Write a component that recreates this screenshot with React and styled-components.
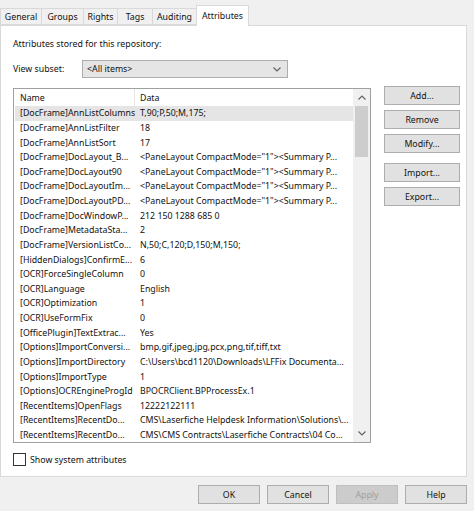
import React from "react";
import styled, { createGlobalStyle } from "styled-components";

const GlobalStyle = createGlobalStyle`
  html, body { margin: 0; padding: 0; background: #f0f0f0; }
  body {
    font-family: "Noto Sans", "Liberation Sans", sans-serif;
    font-size: 8.8px;
    color: #111;
  }
  * { box-sizing: border-box; }
`;

const TABS = ["General", "Groups", "Rights", "Tags", "Auditing", "Attributes"];
const TAB_WIDTHS = [42, 42, 34, 35, 44, 53];

const ROWS = [
  ["[DocFrame]AnnListColumns", "T,90;P,50;M,175;"],
  ["[DocFrame]AnnListFilter", "18"],
  ["[DocFrame]AnnListSort", "17"],
  ["[DocFrame]DocLayout_B...", '<PaneLayout CompactMode="1"><Summary P...'],
  ["[DocFrame]DocLayout90", '<PaneLayout CompactMode="1"><Summary P...'],
  ["[DocFrame]DocLayoutIm...", '<PaneLayout CompactMode="1"><Summary P...'],
  ["[DocFrame]DocLayoutPD...", '<PaneLayout CompactMode="1"><Summary P...'],
  ["[DocFrame]DocWindowP...", "212 150 1288 685 0"],
  ["[DocFrame]MetadataSta...", "2"],
  ["[DocFrame]VersionListCo...", "N,50;C,120;D,150;M,150;"],
  ["[HiddenDialogs]ConfirmE...", "6"],
  ["[OCR]ForceSingleColumn", "0"],
  ["[OCR]Language", "English"],
  ["[OCR]Optimization", "1"],
  ["[OCR]UseFormFix", "0"],
  ["[OfficePlugin]TextExtrac...", "Yes"],
  ["[Options]ImportConversi...", "bmp,gif,jpeg,jpg,pcx,png,tif,tiff,txt"],
  ["[Options]ImportDirectory", "C:\\Users\\bcd1120\\Downloads\\LFFix Documenta..."],
  ["[Options]ImportType", "1"],
  ["[Options]OCREngineProgId", "BPOCRClient.BPProcessEx.1"],
  ["[RecentItems]OpenFlags", "12222122111"],
  ["[RecentItems]RecentDo...", "CMS\\Laserfiche Helpdesk Information\\Solutions\\..."],
  ["[RecentItems]RecentDo...", "CMS\\CMS Contracts\\Laserfiche Contracts\\04 Co..."],
];

const SIDE_BUTTONS = [
  ["Add...", 0],
  ["Remove", 0],
  ["Modify...", 0],
  ["Import...", 5],
  ["Export...", 0],
];

const Chevron = ({ up }) => (
  <svg width="8" height="5" viewBox="0 0 8 5">
    <path
      d={up ? "M0.5 4.5 L4 1 L7.5 4.5" : "M0.5 0.5 L4 4 L7.5 0.5"}
      fill="none"
      stroke="#606060"
      strokeWidth="1.1"
    />
  </svg>
);

export default function App() {
  return (
    <Window>
      <GlobalStyle />
      <TabStrip>
        {TABS.map((t, i) => (
          <Tab key={t} $active={t === "Attributes"} style={{ width: TAB_WIDTHS[i] }}>
            {t}
          </Tab>
        ))}
      </TabStrip>
      <Panel>
        <Caption>Attributes stored for this repository:</Caption>
        <SubsetRow>
          <span>View subset:</span>
          <Combo>
            <span>&lt;All items&gt;</span>
            <Chevron />
          </Combo>
        </SubsetRow>
        <Body>
          <ListBox>
            <ListMain>
              <HeaderRow>
                <HeadCell $w={120}>Name</HeadCell>
                <HeadCell>Data</HeadCell>
              </HeaderRow>
              {ROWS.map(([name, data], i) => (
                <Row key={i} $selected={i === 0}>
                  <Cell $w={120}>{name}</Cell>
                  <Cell>{data}</Cell>
                </Row>
              ))}
            </ListMain>
            <ScrollBar>
              <ScrollArrow>
                <Chevron up />
              </ScrollArrow>
              <Track>
                <Thumb />
              </Track>
              <ScrollArrow>
                <Chevron />
              </ScrollArrow>
            </ScrollBar>
          </ListBox>
          <SideButtons>
            {SIDE_BUTTONS.map(([label, extra]) => (
              <SideButton key={label} $extra={extra}>
                {label}
              </SideButton>
            ))}
          </SideButtons>
        </Body>
        <CheckRow>
          <CheckBox />
          <span>Show system attributes</span>
        </CheckRow>
      </Panel>
      <Footer>
        <DialogButton>OK</DialogButton>
        <DialogButton>Cancel</DialogButton>
        <DialogButton disabled>Apply</DialogButton>
        <DialogButton>Help</DialogButton>
      </Footer>
    </Window>
  );
}

const Window = styled.div`
  width: 474px;
  height: 511px;
  background: #f0f0f0;
  overflow: hidden;
`;

const TabStrip = styled.div`
  display: flex;
  align-items: flex-end;
  height: 26px;
  padding-top: 5px;
  position: relative;
  z-index: 1;
  margin-bottom: -1px;
`;

const Tab = styled.div`
  height: ${(p) => (p.$active ? "21px" : "17px")};
  margin-bottom: ${(p) => (p.$active ? "0" : "1px")};
  margin-left: ${(p) => (p.$active ? "-1px" : "0")};
  display: flex;
  align-items: center;
  justify-content: center;
  border: 1px solid #d9d9d9;
  border-bottom: ${(p) => (p.$active ? "none" : "1px solid #d9d9d9")};
  border-left: ${(p) => (p.$active ? "1px solid #d9d9d9" : "none")};
  background: ${(p) => (p.$active ? "#ffffff" : "#f0f0f0")};
  white-space: nowrap;
  padding-top: ${(p) => (p.$active ? "0" : "1px")};
  &:first-child { border-left: 1px solid #d9d9d9; }
`;

const Panel = styled.div`
  width: 467px;
  height: 452px;
  background: #fff;
  border: 1px solid #d9d9d9;
  padding: 11px 0 0 12px;
  display: flex;
  flex-direction: column;
`;

const Caption = styled.div`
  line-height: 14px;
  height: 14px;
`;

const SubsetRow = styled.div`
  display: flex;
  align-items: center;
  margin-top: 9px;
  height: 18px;
  & > span { width: 69px; }
`;

const Combo = styled.div`
  width: 206px;
  height: 18px;
  background: #e5e5e5;
  border: 1px solid #adadad;
  display: flex;
  align-items: center;
  justify-content: space-between;
  padding: 0 6px 0 4px;
`;

const Body = styled.div`
  display: flex;
  margin-top: 10px;
`;

const ListBox = styled.div`
  width: 358px;
  height: 355px;
  border: 1px solid #a0a0a0;
  display: flex;
  overflow: hidden;
`;

const ListMain = styled.div`
  flex: 1;
  min-width: 0;
  overflow: hidden;
  padding-left: 1px;
`;

const HeaderRow = styled.div`
  display: flex;
  height: 17px;
  align-items: center;
`;

const HeadCell = styled.div`
  ${(p) => (p.$w ? `width: ${p.$w}px; border-right: 1px solid #e5e5e5;` : "flex: 1;")}
  height: 100%;
  display: flex;
  align-items: center;
  padding-left: 5px;
`;

const Row = styled.div`
  display: flex;
  height: 14.64px;
  align-items: center;
  background: ${(p) => (p.$selected ? "#e5e5e5" : "transparent")};
`;

const Cell = styled.div`
  ${(p) => (p.$w ? `width: ${p.$w}px;` : "flex: 1;")}
  padding-left: 5px;
  white-space: nowrap;
  overflow: hidden;
`;

const ScrollBar = styled.div`
  width: 17px;
  background: #f0f0f0;
  display: flex;
  flex-direction: column;
`;

const ScrollArrow = styled.div`
  height: 17px;
  display: flex;
  align-items: center;
  justify-content: center;
`;

const Track = styled.div`
  flex: 1;
  padding: 0 2px;
`;

const Thumb = styled.div`
  height: 51px;
  background: #cdcdcd;
`;

const SideButtons = styled.div`
  display: flex;
  flex-direction: column;
  gap: 5px;
  margin-left: 13px;
  margin-top: -2px;
`;

const SideButton = styled.button`
  width: 76px;
  height: 19px;
  margin-top: ${(p) => p.$extra}px;
  background: #e1e1e1;
  border: 1px solid #adadad;
  font: inherit;
  color: #111;
  padding: 0;
`;

const CheckRow = styled.div`
  display: flex;
  align-items: center;
  gap: 4px;
  margin-top: 10px;
`;

const CheckBox = styled.span`
  width: 13px;
  height: 13px;
  border: 1px solid #333;
  background: #fff;
`;

const Footer = styled.div`
  display: flex;
  justify-content: flex-end;
  gap: 7px;
  padding: 8px 7px 0 0;
`;

const DialogButton = styled.button`
  width: 62px;
  height: 19px;
  background: ${(p) => (p.disabled ? "#cccccc" : "#e1e1e1")};
  border: 1px solid ${(p) => (p.disabled ? "#bfbfbf" : "#adadad")};
  color: ${(p) => (p.disabled ? "#a0a0a0" : "#111")};
  font: inherit;
  padding: 0;
`;
